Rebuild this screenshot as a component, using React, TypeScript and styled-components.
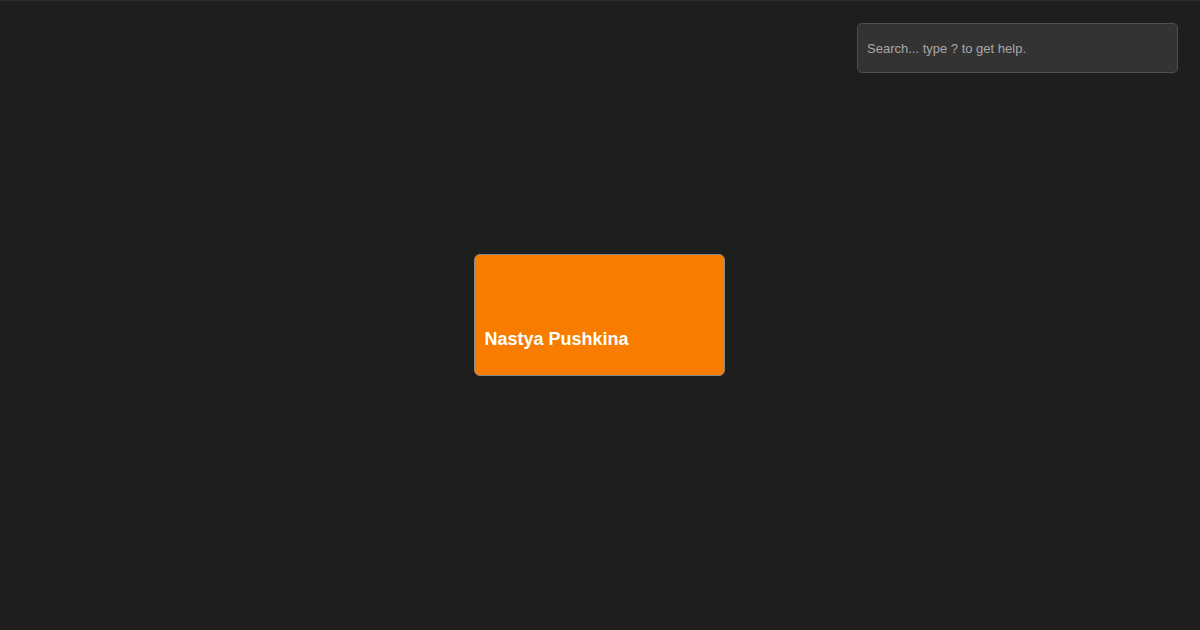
import React from 'react';
import styled, { createGlobalStyle } from 'styled-components';

const GlobalStyle = createGlobalStyle`
  html, body, #root {
    margin: 0;
    height: 100%;
  }
  body {
    background: #1e1e1e;
    font-family: "Liberation Sans", Arial, sans-serif;
    overflow: hidden;
  }
`;

const Canvas = styled.div`
  position: relative;
  height: 100%;
  box-sizing: border-box;
  border-top: 1px solid #2b2b2b;
  display: flex;
  align-items: center;
  justify-content: center;
`;

const SearchBox = styled.input`
  position: absolute;
  top: 22px;
  right: 22px;
  width: 321px;
  height: 50px;
  box-sizing: border-box;
  padding: 0 9px;
  background: #333333;
  border: 1px solid #4f4f4f;
  border-radius: 5px;
  color: #ddd;
  font-family: inherit;
  font-size: 13px;
  outline: none;

  &::placeholder {
    color: #a8a8a8;
  }
`;

const Node = styled.div<{ $color: string }>`
  width: 251px;
  height: 122px;
  margin: 0 2px 2px 0;
  box-sizing: border-box;
  background: ${(p) => p.$color};
  border: 1px solid #8a8a8a;
  border-radius: 6px;
  display: flex;
  flex-direction: column;
  justify-content: flex-end;
  padding: 0 10px 25px;
`;

const NodeLabel = styled.div`
  color: #ffffff;
  font-size: 18px;
  font-weight: bold;
  line-height: 21px;
`;

export default function App() {
  return (
    <>
      <GlobalStyle />
      <Canvas>
        <SearchBox placeholder="Search... type ? to get help." />
        <Node $color="#f77c00">
          <NodeLabel>Nastya Pushkina</NodeLabel>
        </Node>
      </Canvas>
    </>
  );
}
